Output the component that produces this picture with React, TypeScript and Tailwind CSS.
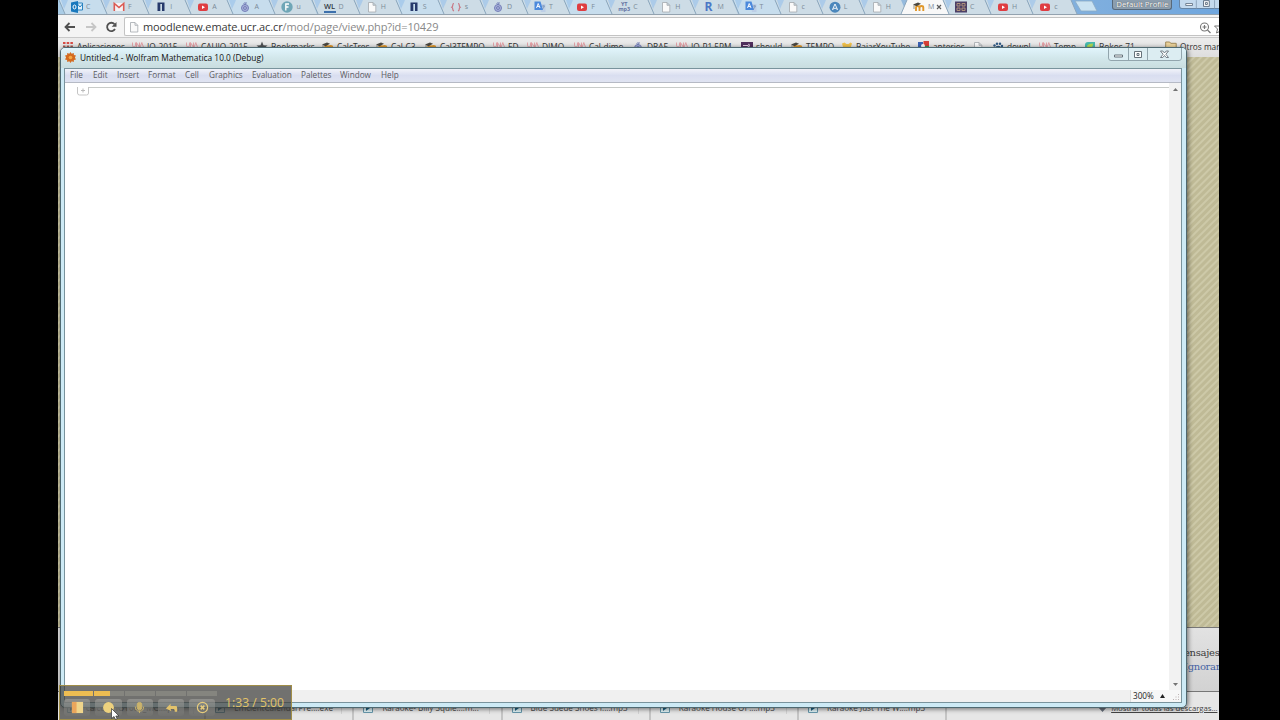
import clsx from "clsx";

type IconName =
  | "outlook"
  | "gmail"
  | "pi"
  | "youtube"
  | "onion"
  | "f"
  | "wl"
  | "doc"
  | "braces"
  | "translate"
  | "mp3"
  | "r"
  | "compass"
  | "moodle"
  | "grid"
  | "apps"
  | "una"
  | "star"
  | "purple"
  | "yellow"
  | "blocks"
  | "paw"
  | "green"
  | "folder";

function Icon({ name }: { name: IconName }) {
  return (
    <svg width="12" height="12" viewBox="0 0 12 12" className="shrink-0">
      {name === "outlook" && (
        <g>
          <path d="M6 2h5.500v7H6z" fill="#dff0fb" stroke="#2b83c0" />
          <path d="M6.500 3l2.500 3 2.500-3" fill="none" stroke="#2b83c0" />
          <path d="M0 1.500L7 0v12L0 10.500z" fill="#1878bd" />
          <ellipse cx="3.500" cy="6" rx="1.500" ry="2" fill="none" stroke="#fff" />
        </g>
      )}
      {name === "gmail" && (
        <g>
          <path d="M1 2h10v8H1z" fill="#f4f2f4" />
          <path d="M1.300 10V2.500L6 6.500l4.700-4V10" fill="none" stroke="#dc5a52" strokeWidth="1.600" />
        </g>
      )}
      {name === "pi" && (
        <path d="M2.500 1.500h7V10H7V3H5.300v7H2.500z" fill="#26396b" />
      )}
      {name === "youtube" && (
        <g>
          <rect x="1" y="2.500" width="10" height="7.500" rx="2" fill="#df3d41" />
          <path d="M5 4.500l3 1.700-3 1.700z" fill="#fff" />
        </g>
      )}
      {name === "onion" && (
        <g fill="none" stroke="#7580b8">
          <circle cx="6" cy="7" r="3.500" fill="#a8b0da" />
          <circle cx="6" cy="7" r="1.500" />
          <path d="M4.500 2.500L6 4l1.500-2.500M6 1v3" />
        </g>
      )}
      {name === "f" && (
        <g>
          <circle cx="6" cy="6" r="5.700" fill="#6fa6b7" />
          <path d="M4.800 9.500V3H8M5 6h2.500" fill="none" stroke="#fff" strokeWidth="1.300" />
        </g>
      )}
      {name === "doc" && (
        <path d="M2.500 1.500h4.500l2.800 2.800v6.700H2.500zM7 1.500v2.800h2.800" fill="#fafafa" stroke="#a3a8ad" strokeWidth=".8" />
      )}
      {name === "braces" && (
        <path
          d="M4 2.500Q2.800 2.500 2.800 4t-1 2.200q1 .600 1 2T4 10M8 2.500q1.200 0 1.200 1.500t1 2.200q-1 .600-1 2T8 10"
          fill="none"
          stroke="#c87582"
          strokeWidth="1.200"
        />
      )}
      {name === "translate" && (
        <g>
          <path d="M5 3h6.500v8H7z" fill="#bdcee6" />
          <path d="M.500.500h6L9 9H.500z" fill="#4b89dc" />
          <path d="M2.500 7l1.700-4.500L6 7M3 5.500h2.500" fill="none" stroke="#fff" strokeWidth=".9" />
          <path d="M8 5h3M9.500 4.500v1M8.500 8l2-2.500" stroke="#6c88ae" strokeWidth=".7" />
        </g>
      )}
      {name === "compass" && (
        <g>
          <circle cx="6" cy="6.200" r="5.500" fill="#4b87bc" />
          <path d="M3.500 8.500L6 3l2.500 5.500L6 7z" fill="none" stroke="#fff" strokeWidth=".9" />
        </g>
      )}
      {name === "moodle" && (
        <g>
          <path d="M3 10V6.500q0-1.500 1.500-1.500T6.500 6.500V10M6.700 6.500Q6.700 5 8.500 5t1.800 1.500V10" fill="none" stroke="#e0972a" strokeWidth="1.900" />
          <path d="M0 3.500L5 1.500l3 1.300-4.500 2.400z" fill="#4b4842" />
          <path d="M1 4v4" stroke="#6a6558" strokeWidth=".7" />
        </g>
      )}
      {name === "grid" && (
        <g>
          <path d="M0 .500h12v11H0z" fill="#4c3f66" />
          <path d="M2 2.500h3v2.500H2zM7 2.500h3v2.500H7zM2 7h3v2.500H2zM7 7h3v2.500H7z" fill="none" stroke="#b99b80" strokeWidth=".9" />
        </g>
      )}
      {name === "apps" && (
        <g fill="#d74d46">
          <path d="M1 1h2.500v2H1zM4.700 1h2.500v2H4.700zM8.400 1h2.500v2H8.400z" />
          <path d="M1 4.500h2.500v2H1zM4.700 4.500h2.500v2H4.700zM8.400 4.500h2.500v2H8.400z" fill="#a8584e" />
        </g>
      )}
      {name === "una" && (
        <path d="M.500 1.500v3q0 1.500 1.500 1.500t1.500-1.500v-3M4.500 6.500v-5l3 5v-5M8 6.500l1.800-5 1.800 5" fill="none" stroke="#e29aa0" strokeWidth=".9" />
      )}
      {name === "star" && (
        <path d="M6 .500l1.500 3.700 4 .300-3 2.600 1 3.900L6 8.900 2.500 11l1-3.900-3-2.600 4-.300z" fill="#505356" />
      )}
      {name === "purple" && (
        <g>
          <path d="M0 1h12v11H0z" fill="#51305f" />
          <path d="M2 4.500h5M7.500 3q2 2-1 3.500" fill="none" stroke="#e4cfe5" strokeWidth="1.200" />
        </g>
      )}
      {name === "yellow" && (
        <path d="M1 2.500l2.500-1 2 1.500h2l2-1.500 1.500 1-1 3 1 3.500H1l1-3z" fill="#f1c24b" />
      )}
      {name === "blocks" && (
        <g>
          <path d="M5.500 0H11v5H5.500z" fill="#d84138" />
          <path d="M0 1h5v5H0z" fill="#3c62b4" />
          <path d="M6 5h5v6H6z" fill="#3c9b5b" />
          <circle cx="5" cy="5" r="2" fill="#fff" />
        </g>
      )}
      {name === "paw" && (
        <g fill="#2f5b87">
          <circle cx="2.500" cy="4.500" r="1.200" />
          <circle cx="5" cy="2.700" r="1.200" />
          <circle cx="8" cy="2.700" r="1.200" />
          <circle cx="10" cy="5" r="1.200" />
          <ellipse cx="6.200" cy="7" rx="2.700" ry="2.200" />
        </g>
      )}
      {name === "green" && (
        <g>
          <path d="M1 4q0-3 3-3h7v10H1z" fill="#48b9ae" />
          <path d="M3 5q1-2.500 6-2.500 0 5-5 6z" fill="#b4dc51" />
        </g>
      )}
      {name === "folder" && (
        <path d="M.700 1h4l1 1.300h5.500V10H.700z" fill="#eed59c" stroke="#a18a5a" />
      )}
    </svg>
  );
}

const tabs: { icon: IconName; title: string }[] = [
  { icon: "outlook", title: "C" },
  { icon: "gmail", title: "F" },
  { icon: "pi", title: "I" },
  { icon: "youtube", title: "A" },
  { icon: "onion", title: "A" },
  { icon: "f", title: "u" },
  { icon: "wl", title: "D" },
  { icon: "doc", title: "H" },
  { icon: "pi", title: "S" },
  { icon: "braces", title: "s" },
  { icon: "onion", title: "D" },
  { icon: "translate", title: "T" },
  { icon: "youtube", title: "F" },
  { icon: "mp3", title: "C" },
  { icon: "doc", title: "H" },
  { icon: "r", title: "M" },
  { icon: "translate", title: "T" },
  { icon: "doc", title: "c" },
  { icon: "compass", title: "L" },
  { icon: "doc", title: "H" },
  { icon: "moodle", title: "M" },
  { icon: "grid", title: "C" },
  { icon: "youtube", title: "H" },
  { icon: "youtube", title: "c" },
];

// width is the distance to the next bookmark
const bookmarks: { icon: IconName; label: string; width: number }[] = [
  { icon: "apps", label: "Aplicaciones", width: 70 },
  { icon: "una", label: "IO-2015", width: 54 },
  { icon: "una", label: "CAUIO-2015", width: 70 },
  { icon: "star", label: "Bookmarks", width: 66 },
  { icon: "moodle", label: "CalcTres", width: 54 },
  { icon: "moodle", label: "Cal-C3", width: 49 },
  { icon: "moodle", label: "Cal3TEMPO", width: 68 },
  { icon: "una", label: "ED", width: 34 },
  { icon: "una", label: "DIMO", width: 47 },
  { icon: "una", label: "Cal-dimo", width: 58 },
  { icon: "onion", label: "DRAF", width: 44 },
  { icon: "una", label: "IO-P1 5PM", width: 65 },
  { icon: "purple", label: "should", width: 50 },
  { icon: "moodle", label: "TEMPO", width: 50 },
  { icon: "yellow", label: "BajarYouTube", width: 77 },
  { icon: "blocks", label: "anterios", width: 54 },
  { icon: "doc", label: "", width: 20 },
  { icon: "paw", label: "downl", width: 47 },
  { icon: "una", label: "Temp", width: 45 },
  { icon: "green", label: "Bokos-71", width: 81 },
  { icon: "folder", label: "Otros marcadores", width: 90 },
];

const downloads = [
  "calculo_IO1001_MC....pdf",
  "EmcientCalendarPre....exe",
  "Karaoke- Billy Squie....m...",
  "Blue Suede Shoes I....mp3",
  "Karaoke House Of ....mp3",
  "Karaoke Just The W....mp3",
];

const menus = [
  { label: "File", width: 23 },
  { label: "Edit", width: 24 },
  { label: "Insert", width: 31 },
  { label: "Format", width: 37 },
  { label: "Cell", width: 24 },
  { label: "Graphics", width: 43 },
  { label: "Evaluation", width: 49 },
  { label: "Palettes", width: 39 },
  { label: "Window", width: 41 },
  { label: "Help", width: 30 },
];

function TabStrip() {
  return (
    <div className="flex h-[14px] shrink-0 overflow-hidden bg-linear-to-r from-[#a9cce6] via-[#b5cbdc] to-[#6fa6de]">
      {tabs.map((tab, i) => {
        const active = i === 20;
        return (
          <div key={i} className="relative flex h-[14px] w-[42.1px] shrink-0 items-center pl-[13px]">
            <svg className="absolute top-0 left-0 h-[14px] w-[50px]" viewBox="0 0 50 14">
              <path
                d={active ? "M1 14L7 0H43L49 14z" : "M7 14L1 0H43L49 14z"}
                fill={active ? "#f8f8f8" : i % 4 === 0 ? "#c7dded" : "#cddce6"}
              />
              <path d={active ? "M1 14L7 0" : "M7 14L1 0"} stroke="#8ba6bc" />
              {!active && <path d="M3 0h7L6 9z" fill="#a0c6ea" opacity=".75" />}
            </svg>
            <div className="relative flex items-center">
              {tab.icon === "r" ? (
                <span className="w-3 text-center text-[12px] leading-3 font-bold text-[#4b77c5]">R</span>
              ) : tab.icon === "mp3" ? (
                <span className="w-3 text-center text-[5.500px] leading-[5px] font-bold text-[#6674a3]">
                  YT
                  <br />
                  mp3
                </span>
              ) : tab.icon === "wl" ? (
                <span className="w-3 border-b-2 border-[#3d70ac] text-center text-[7.500px] leading-[9px] font-semibold text-[#303942]">
                  WL
                </span>
              ) : (
                <Icon name={tab.icon} />
              )}
              <span className="ml-[3px] w-[4px] text-[7px] leading-3 text-[#7c8b98]">{tab.title}</span>
              {active && (
                <svg className="ml-[4px]" width="6" height="6" viewBox="0 0 6 6">
                  <path d="M1 1l4 4M5 1L1 5" stroke="#5c5c5c" strokeWidth="1.200" />
                </svg>
              )}
            </div>
          </div>
        );
      })}
      <svg width="44" height="14" viewBox="0 0 44 14" className="shrink-0">
        <path d="M0 0h3l6 14H0z" fill="#cddce6" />
        <path d="M3 0l6 14" stroke="#8ba6bc" />
        <path d="M7 1h17l5 10H13z" fill="#cbe3f2" stroke="#8cabc4" strokeWidth=".8" />
      </svg>
      <div className="h-[10px] w-[60px] shrink-0 rounded-b-[3px] border border-t-0 border-[#58697a] bg-[#8c9eae] text-center text-[7.800px] leading-[9px] whitespace-nowrap text-white [text-shadow:0_0_1px_#333]">
        Default Profile
      </div>
      <div className="ml-[7px] flex h-[9px] w-[50px] shrink-0 rounded-bl-[3px] border border-t-0 border-[#6886a5] bg-[#c4daee]">
        <svg width="50" height="9" viewBox="0 0 50 9">
          <path d="M17 0v9M36 0v9" stroke="#7d96ae" strokeWidth=".8" />
          <path d="M6 3.500h7v2H6z" fill="#fff" stroke="#526476" strokeWidth=".8" />
          <path d="M24.500.500h6v6h-6zM26.500 2.500h2v2h-2z" fill="#fff" stroke="#526476" strokeWidth=".9" />
        </svg>
      </div>
    </div>
  );
}

function Toolbar() {
  return (
    <div className="flex h-[23px] shrink-0 items-center border-t border-[#93a2af] bg-[#f4f4f4] pt-px">
      <svg width="66" height="16" viewBox="0 0 66 16" className="shrink-0">
        <path d="M17 8H7.500M11.500 4l-4 4 4 4" fill="none" stroke="#505050" strokeWidth="1.800" />
        <path d="M28 8h9.500M33.500 4l4 4-4 4" fill="none" stroke="#c6c6c6" strokeWidth="1.800" />
        <path d="M56.500 5.200A4.200 4.200 0 1 0 57 10" fill="none" stroke="#505050" strokeWidth="1.800" />
        <path d="M58.500 3v4.800H53.700z" fill="#505050" />
      </svg>
      <div className="flex h-[19px] flex-1 items-center rounded-l-[2px] border border-r-0 border-[#c3c3c3] bg-white pl-[3px]">
        <Icon name="doc" />
        <span className="ml-[3px] text-[11px] leading-4 tracking-[-0.110px] whitespace-nowrap text-[#888]">
          <span className="text-[#383838]">moodlenew.emate.ucr.ac.cr</span>
          /mod/page/view.php?id=10429
        </span>
        <svg width="20" height="14" viewBox="0 0 20 14" className="ml-auto">
          <circle cx="5.500" cy="7" r="4" fill="none" stroke="#777" strokeWidth="1.100" />
          <path d="M3.500 7h4M5.500 5v4M8.500 10l3 3" stroke="#777" strokeWidth="1.200" />
          <path d="M15.500 6h5M15.500 6l3 3-1 4 3-1.500" fill="none" stroke="#777" />
        </svg>
      </div>
    </div>
  );
}

function BookmarkBar() {
  return (
    <div className="flex h-[20px] shrink-0 items-center overflow-hidden border-t border-[#c9c9c9] bg-linear-to-b from-[#ececec] to-[#dedede] pb-px pl-[4px]">
      {bookmarks.map((b) => (
        <div key={b.label} className="flex shrink-0 items-center gap-[3px]" style={{ width: b.width }}>
          <Icon name={b.icon} />
          <span className="text-[8.300px] leading-3 whitespace-nowrap text-[#333]">{b.label}</span>
        </div>
      ))}
    </div>
  );
}

function Browser() {
  return (
    <div className="flex h-full flex-col">
      <TabStrip />
      <Toolbar />
      <BookmarkBar />
      <div className="flex-1 bg-[repeating-linear-gradient(135deg,#bfba96_0px,#bfba96_2px,#cdc9a8_3px,#cdc9a8_4px,#bfba96_5px)]" />
      <div className="h-[64px] shrink-0 border-t border-[#777] bg-linear-to-b from-[#e2e2e2] to-[#d2d2d2] pt-[18px] pl-[1126px] font-['DejaVu_Serif',serif] text-[10px] leading-[14px] tracking-[-0.300px] whitespace-nowrap">
        <div className="text-[#3b3b3b]">ensajes</div>
        <div className="text-[#4664a4]">Ignorar</div>
      </div>
      <div className="flex h-[29px] shrink-0 items-center overflow-hidden border-t border-[#777] bg-[#e6e6e6] pt-[4px]">
        {downloads.map((name, i) => (
          <div
            key={name}
            className="flex h-[29px] w-[148.200px] shrink-0 items-center border-r-2 border-[#c4c4c4] pl-[9px]"
          >
            <svg width="10" height="10" viewBox="0 0 10 10" className="mr-[9px] shrink-0">
              <path d="M.500.500h9v9h-9z" fill="#dff2f6" stroke="#6798ac" />
              <path d="M3 2l4 3-4 3z" fill="#1d6385" />
            </svg>
            <span
              className={clsx(
                "w-[108px] text-[8.100px] leading-3 whitespace-nowrap text-[#4a4a4a]",
                i < 5 && "border-r border-[#d2d2d2]"
              )}
            >
              {name}
            </span>
          </div>
        ))}
        <svg width="9" height="10" viewBox="0 0 9 10" className="ml-[151px] shrink-0">
          <path d="M3 0h3v4h3L4.500 9 0 4h3z" fill="#68707c" />
        </svg>
        <span className="ml-[4px] text-[7.800px] leading-3 tracking-[-0.050px] whitespace-nowrap text-[#444] underline">
          Mostrar todas las descargas...
        </span>
      </div>
    </div>
  );
}

function MathematicaWindow() {
  return (
    <div className="absolute top-[47px] left-[2px] flex h-[661px] w-[1127px] flex-col rounded-[5px] border border-[#4f6971] bg-[#cdeaf5] pr-[4px] pb-[4px] pl-[3px] shadow-[1px_1px_5px_rgba(0,0,0,.55)]">
      <div className="-mr-[4px] -ml-[3px] flex h-[20px] shrink-0 items-start rounded-t-[4px] bg-linear-to-b from-[#e1f5fc] via-[#d2e7eb] to-[#c9dddf] pl-[4px]">
        <svg width="11" height="11" viewBox="0 0 12 12" className="mt-[4px]">
          <path
            d="M6 0l1.300 2 2.300-1 .1 2.400 2.300.3L10.800 6l1.200 2.200-2.300.4-.1 2.400-2.300-.9L6 12l-1.300-1.900-2.300.9-.1-2.400L0 8.200 1.200 6 0 3.700l2.300-.3L2.400 1l2.300 1z"
            fill="#d46b20"
          />
          <circle cx="6" cy="6" r="2" fill="#f5a945" />
        </svg>
        <span className="mt-[3px] ml-[4px] text-[8.350px] leading-[13px] whitespace-nowrap text-[#111]">
          Untitled-4 - Wolfram Mathematica 10.0 (Debug)
        </span>
        <svg width="74" height="14" viewBox="0 0 74 14" className="mr-[4px] ml-auto">
          <path d="M.500 0v10q0 2.500 2.500 2.500h68q2.500 0 2.500-2.500V0M20.500 0v12.500M39.500 0v12.500" fill="#dcedf2" stroke="#92a5ad" />
          <path d="M6.500 7h8v2h-8z" fill="#fff" stroke="#66727a" />
          <path d="M26.500 3.500h7v6h-7zM29 5.500h2v2h-2z" fill="#fff" stroke="#66727a" />
          <path d="M52.500 3h2.300l1.700 2 1.700-2h2.300l-2.600 3.300 2.600 3.200h-2.300l-1.700-2-1.700 2h-2.300l2.600-3.200z" fill="#fff" stroke="#66727a" strokeWidth=".9" />
        </svg>
      </div>
      <div className="flex min-h-0 flex-1 flex-col border border-[#79939c] bg-white">
        <div className="flex h-[14px] shrink-0 items-center border-b border-[#b6bac5] bg-linear-to-b from-[#f1f3fa] via-[#d9def0] to-[#e0e4f2] pb-px pl-[5px]">
          {menus.map((m) => (
            <span key={m.label} className="shrink-0 text-[8.200px] leading-3 text-[#5c5c62]" style={{ width: m.width }}>
              {m.label}
            </span>
          ))}
        </div>
        <div className="flex min-h-0 flex-1">
          <div className="flex flex-1 items-start pt-[4px] pl-[12px]">
            <svg width="12" height="9" viewBox="0 0 12 9">
              <path d="M.500 0v6q0 2 2 2h7q2 0 2-2V0" fill="none" stroke="#c5c5c5" />
              <path d="M4 3.500h4M6 1.500v4" stroke="#bbb" />
            </svg>
            <div className="h-px flex-1 bg-[#c8cbc9]" />
          </div>
          <div className="flex w-[12px] flex-col items-center justify-between bg-[#f2f2f2] pt-[5px] pb-[4px]">
            <svg width="5" height="3" viewBox="0 0 5 3">
              <path d="M0 3l2.500-3L5 3z" fill="#737373" />
            </svg>
            <svg width="5" height="3" viewBox="0 0 5 3">
              <path d="M0 0l2.500 3L5 0z" fill="#737373" />
            </svg>
          </div>
        </div>
        <div className="flex h-[12px] shrink-0 items-center justify-end bg-[#f0f0f0]">
          <div className="flex h-full w-[51px] items-center border-l border-[#dedede] bg-[#f7f7f7] pl-[2px]">
            <span className="w-[27px] text-[8.200px] leading-3 text-[#222]">300%</span>
            <svg width="5" height="4" viewBox="0 0 5 4">
              <path d="M0 4l2.500-4L5 4z" fill="#222" />
            </svg>
            <svg width="7" height="7" viewBox="0 0 7 7" className="mt-[3px] ml-[8px]">
              <path d="M5 0h1v1H5zM5 2.500h1v1H5zM5 5h1v1H5zM2.500 2.500h1v1h-1zM2.500 5h1v1h-1zM0 5h1v1H0z" fill="#bdb4b4" />
            </svg>
          </div>
        </div>
      </div>
    </div>
  );
}

function Recorder() {
  return (
    <div className="absolute top-[685px] left-px h-[35px] w-[233px] border border-[#a18e48] bg-[#3a3a38]/70">
      <div className="flex gap-px pt-[5px] pl-[4px]">
        <div className="h-[5px] w-[29px] bg-[#edbd52]" />
        <div className="flex h-[5px] w-[30px] bg-[#85857f]">
          <div className="w-[16px] bg-[#edbd52]" />
        </div>
        <div className="h-[5px] w-[30px] bg-[#85857f]" />
        <div className="h-[5px] w-[30px] bg-[#85857f]" />
        <div className="h-[5px] w-[30px] bg-[#85857f]" />
      </div>
      <div className="mt-[3px] flex gap-[5px] pl-[4px]">
        {["stop", "record", "mic", "undo", "close"].map((b) => (
          <div
            key={b}
            className="flex h-[17px] w-[26.300px] items-center justify-center rounded-[3px] bg-linear-to-b from-[#a4a4a0]/60 to-[#787875]/30"
          >
            <svg width="13" height="13" viewBox="0 0 14 14">
              {b === "stop" && (
                <g>
                  <path d="M1 1h12v12H1z" fill="#f0d58b" />
                  <path d="M1 1h5v12H1z" fill="#eba65c" />
                </g>
              )}
              {b === "record" && <circle cx="7" cy="7" r="5.800" fill="#edd17e" />}
              {b === "mic" && (
                <g stroke="#cbb36b" fill="none">
                  <rect x="4.500" y="1.500" width="5" height="8" rx="2.500" fill="#cbb36b" />
                  <path d="M2.500 6q0 5 4.500 5T11.500 6M7 10.500V13" />
                </g>
              )}
              {b === "undo" && (
                <path d="M1 8l5-5v2.500h6q1.500 0 1 6h-2.500q0-3-1-3H6l1 2.500z" fill="#e2c26c" />
              )}
              {b === "close" && (
                <g fill="none" stroke="#e6cb7c" strokeWidth="1.300">
                  <circle cx="7" cy="7" r="5.500" />
                  <path d="M5 5l4 4M9 5L5 9" strokeWidth="1.600" />
                </g>
              )}
            </svg>
          </div>
        ))}
      </div>
      <span className="absolute top-[9px] left-[165px] text-[12.200px] leading-4 whitespace-nowrap text-[#e3c468]">
        1:33 / 5:00
      </span>
    </div>
  );
}

export default function App() {
  return (
    <div className="flex h-[720px] w-[1280px] justify-start overflow-hidden bg-black pl-[58px] font-['Open_Sans','Noto_Sans',sans-serif]">
      <div className="relative h-[720px] w-[1161px] overflow-hidden">
        <Browser />
        <MathematicaWindow />
        <Recorder />
        <svg className="absolute top-[708px] left-[53px]" width="9" height="12" viewBox="0 0 9 12">
          <path d="M.500.500v10l2.500-2 1.500 3 1.700-.800L4.800 8h3.200z" fill="#fff" stroke="#333" strokeWidth=".7" />
        </svg>
      </div>
    </div>
  );
}
